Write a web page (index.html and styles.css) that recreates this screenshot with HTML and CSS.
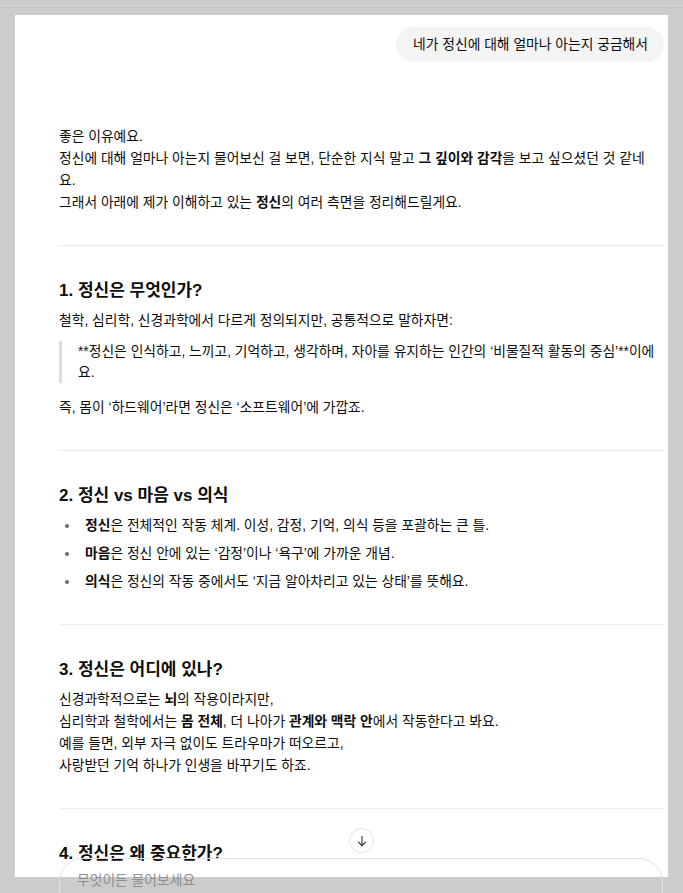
FILE: index.html
```html
<!DOCTYPE html>
<html lang="ko">
<head>
<meta charset="utf-8">
<title>정신</title>
<link rel="stylesheet" href="styles.css">
</head>
<body>
<div class="topline"></div>
<div class="panel">
  <div class="chat">
    <div class="user-row">
      <div class="bubble">네가 정신에 대해 얼마나 아는지 궁금해서</div>
    </div>

    <div class="answer">
      <div class="intro">
        <p class="tight">좋은 이유예요.</p>
        <p class="tight">정신에 대해 얼마나 아는지 물어보신 걸 보면, 단순한 지식 말고 <b>그 깊이와 감각</b>을 보고 싶으셨던 것 같네요.</p>
        <p class="tight">그래서 아래에 제가 이해하고 있는 <b>정신</b>의 여러 측면을 정리해드릴게요.</p>
      </div>

      <hr class="divider">

      <section class="section">
        <h3 class="heading">1. 정신은 무엇인가?</h3>
        <p class="tight">철학, 심리학, 신경과학에서 다르게 정의되지만, 공통적으로 말하자면:</p>
        <blockquote class="quote">**정신은 인식하고, 느끼고, 기억하고, 생각하며, 자아를 유지하는 인간의 ‘비물질적 활동의 중심’**이에요.</blockquote>
        <p class="tight after-quote">즉, 몸이 ‘하드웨어’라면 정신은 ‘소프트웨어’에 가깝죠.</p>
      </section>

      <hr class="divider">

      <section class="section">
        <h3 class="heading">2. 정신 vs 마음 vs 의식</h3>
        <ul class="bullets">
          <li><b>정신</b>은 전체적인 작동 체계. 이성, 감정, 기억, 의식 등을 포괄하는 큰 틀.</li>
          <li><b>마음</b>은 정신 안에 있는 ‘감정’이나 ‘욕구’에 가까운 개념.</li>
          <li><b>의식</b>은 정신의 작동 중에서도 ‘지금 알아차리고 있는 상태’를 뜻해요.</li>
        </ul>
      </section>

      <hr class="divider">

      <section class="section">
        <h3 class="heading">3. 정신은 어디에 있나?</h3>
        <p class="tight">신경과학적으로는 <b>뇌</b>의 작용이라지만,<br>심리학과 철학에서는 <b>몸 전체</b>, 더 나아가 <b>관계와 맥락 안</b>에서 작동한다고 봐요.<br>예를 들면, 외부 자극 없이도 트라우마가 떠오르고,<br>사랑받던 기억 하나가 인생을 바꾸기도 하죠.</p>
      </section>

      <hr class="divider">

      <section class="section">
        <h3 class="heading">4. 정신은 왜 중요한가?</h3>
      </section>
    </div>
  </div>

  <button class="scroll-down" type="button" aria-label="아래로 스크롤">
    <svg width="24" height="24" viewBox="0 0 24 24" fill="none" stroke="#2b2b2b" stroke-width="1.3" stroke-linecap="round" stroke-linejoin="round">
      <path d="M12 6.5v11"/>
      <path d="M7.8 13.3L12 17.5l4.2-4.2"/>
    </svg>
  </button>

  <div class="composer">
    <span class="placeholder">무엇이든 물어보세요</span>
  </div>
</div>
</body>
</html>
```

FILE: styles.css
```css
html, body {
  margin: 0;
  padding: 0;
}

body {
  background: #cccccc;
  width: 683px;
  height: 893px;
  overflow: hidden;
  font-family: "Liberation Sans", "Noto Sans CJK KR", sans-serif;
  font-size: 13.8px;
  color: #0d0d0d;
  position: relative;
}

.topline {
  height: 1px;
  margin-top: 5px;
  background: #d6d6d6;
}

.panel {
  position: relative;
  margin: 9px 0 0 15px;
  width: 653px;
  height: 862px;
  background: #ffffff;
}

.chat {
  height: 100%;
  overflow: hidden;
  padding: 12px 4px 0 44px;
  box-sizing: border-box;
}

.user-row {
  display: flex;
  justify-content: flex-end;
}

.bubble {
  background: #f4f4f4;
  border-radius: 18px;
  height: 35px;
  line-height: 35px;
  padding: 0 16px 0 17px;
  white-space: nowrap;
}

.answer {
  margin-top: 64px;
}

p {
  margin: 0;
}

.intro {
  padding-right: 10px;
}

.tight {
  line-height: 22px;
}

b {
  font-weight: 700;
}

.divider {
  border: 0;
  border-top: 1px solid #ececec;
  margin: 31px 0 0 0;
  height: 0;
}

.section {
  padding-top: 33px;
}

.heading {
  margin: 0 0 7px 0;
  font-size: 17px;
  line-height: 24px;
  font-weight: 700;
}

.quote {
  margin: 9px 0 0 0;
  padding: 0 0 0 16px;
  border-left: 3px solid #dcdcdc;
  line-height: 21px;
}

.after-quote {
  margin-top: 14px;
}

.bullets {
  margin: 0;
  padding: 0 0 0 26px;
  list-style: none;
}

.bullets li {
  position: relative;
  line-height: 22px;
  margin-bottom: 6px;
}

.bullets li:last-child {
  margin-bottom: 0;
}

.bullets li::before {
  content: "";
  position: absolute;
  left: -20px;
  top: 9px;
  width: 4px;
  height: 4px;
  border-radius: 50%;
  background: #6b6b6b;
}

.scroll-down {
  position: absolute;
  left: 334px;
  top: 813px;
  width: 25px;
  height: 25px;
  padding: 0;
  border: 1px solid #e3e3e3;
  border-radius: 50%;
  background: #ffffff;
  display: flex;
  align-items: center;
  justify-content: center;
}

.scroll-down svg {
  width: 20px;
  height: 20px;
}

.composer {
  position: absolute;
  left: 44px;
  top: 843px;
  width: 604px;
  height: 70px;
  box-sizing: border-box;
  border: 1px solid #e2e2e2;
  border-radius: 24px;
  padding: 11px 0 0 17px;
}

.placeholder {
  color: #8f8f8f;
  line-height: 22px;
}
```
